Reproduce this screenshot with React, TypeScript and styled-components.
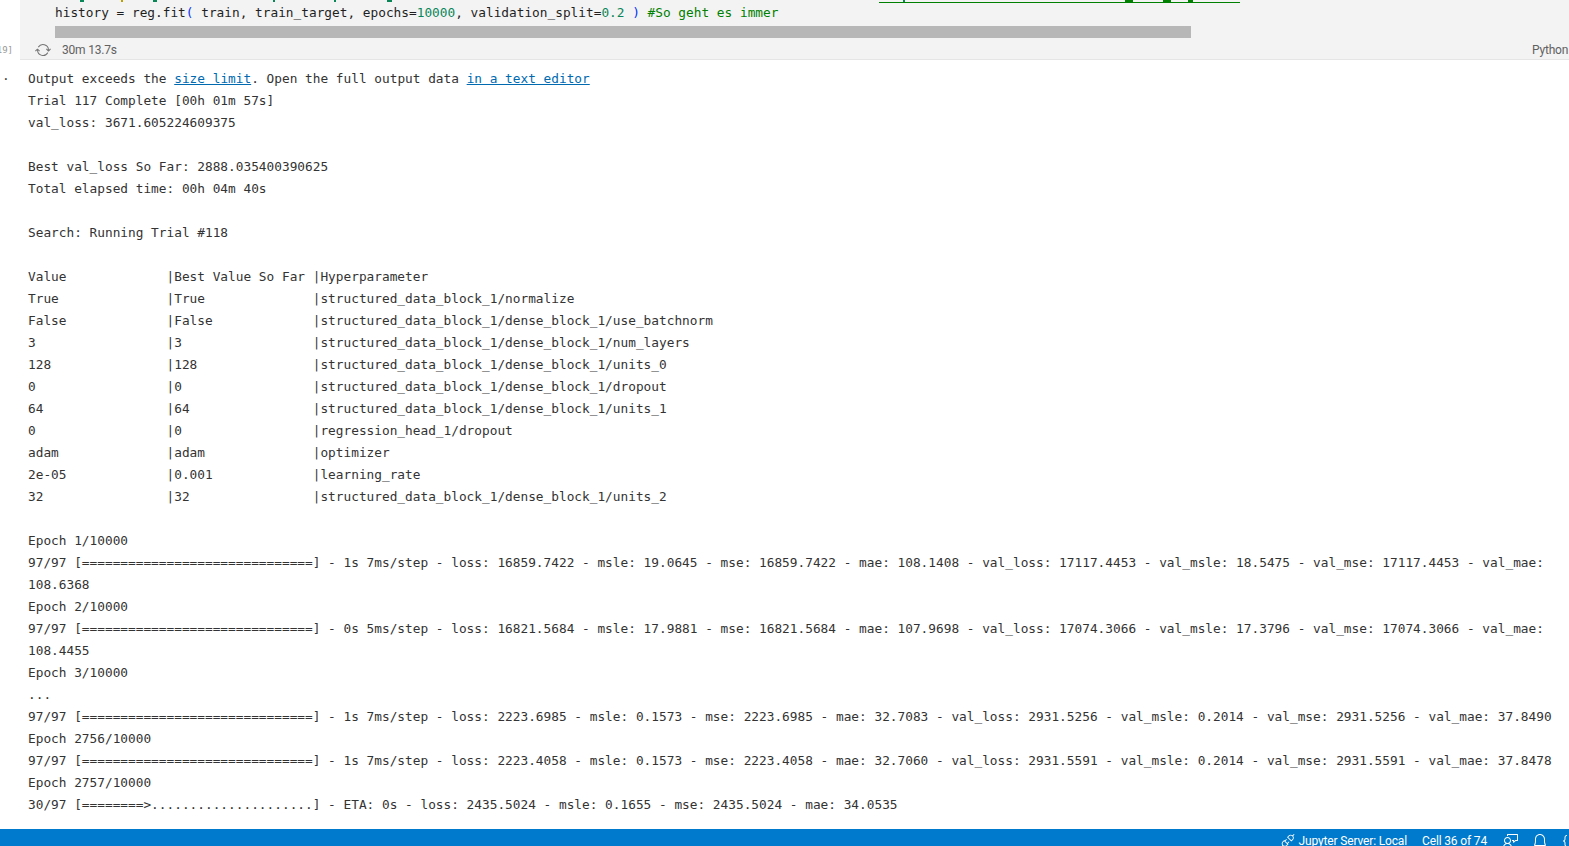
import React from 'react';
import styled, { createGlobalStyle } from 'styled-components';
import { VscBell, VscDebugDisconnect, VscFeedback, VscJson, VscSync } from 'react-icons/vsc';

const GlobalStyle = createGlobalStyle`
  html, body {
    margin: 0;
    padding: 0;
    height: 100%;
    overflow: hidden;
    background: #fff;
  }
`;

const Page = styled.div`
  display: flex;
  flex-direction: column;
  width: 1569px;
  height: 846px;
  overflow: hidden;
`;

const Main = styled.main`
  flex: 1;
  min-height: 0;
  overflow: hidden;
`;

const CellRow = styled.section`
  display: flex;
  height: 60px;
`;

const Gutter = styled.div`
  width: 20px;
  flex: none;
  display: flex;
  align-items: flex-end;
  justify-content: flex-end;
  padding: 0 7px 5px 0;
  box-sizing: border-box;
  font: 9px 'DejaVu Sans Mono', monospace;
  color: #999;
  white-space: nowrap;
`;

const CellBody = styled.div`
  flex: 1;
  min-width: 0;
  display: flex;
  flex-direction: column;
  background: #f3f3f3;
  border-bottom: 1px solid #e5e5e5;
  overflow: hidden;
`;

const ClippedLine = styled.svg`
  display: block;
  width: 1549px;
  height: 3px;
  flex: none;
`;

const CodeLine = styled.div`
  height: 23px;
  padding-left: 35px;
  box-sizing: border-box;
  font: 12.79px/20px 'DejaVu Sans Mono', monospace;
  white-space: pre;
  color: #1f1f1f;
`;

const Num = styled.span`
  color: #098658;
`;

const Paren = styled.span`
  color: #0431fa;
`;

const Comment = styled.span`
  color: #008000;
`;

const ScrollTrack = styled.div`
  height: 12px;
  padding-left: 35px;
`;

const ScrollThumb = styled.div`
  width: 1136px;
  height: 12px;
  background: #b7b7b7;
`;

const CellFooter = styled.div`
  flex: 1;
  display: flex;
  align-items: center;
  padding: 2px 0 0 15px;
  font: 12px Roboto, sans-serif;
  letter-spacing: -0.2px;
  color: #616161;
`;

const SpinIcon = styled(VscSync)`
  font-size: 16px;
  color: #757575;
  margin-right: 11px;
`;

const Language = styled.span`
  margin-left: auto;
  width: 37px;
  white-space: nowrap;
`;

const OutputRow = styled.section`
  display: flex;
  padding-top: 8px;
`;

const OutputMenu = styled.div`
  width: 28px;
  flex: none;
  padding-left: 2px;
  box-sizing: border-box;
  font: 12.79px/22px 'DejaVu Sans Mono', monospace;
  color: #444;
`;

const Output = styled.pre`
  margin: 0;
  width: 1530px;
  font: 12.79px/22px 'DejaVu Sans Mono', monospace;
  color: #333;
  white-space: pre-wrap;
`;

const OutLink = styled.a`
  color: #006ab1;
  text-decoration: underline;
`;

const StatusBar = styled.footer`
  height: 17px;
  flex: none;
  display: flex;
  align-items: flex-start;
  justify-content: flex-end;
  background: #007acc;
  color: #fff;
  font: 12px/24px Roboto, sans-serif;
  letter-spacing: -0.15px;
  overflow: hidden;
`;

const StatusItem = styled.span<{ $gap: number }>`
  display: flex;
  align-items: center;
  flex: none;
  height: 24px;
  gap: 3px;
  margin-left: ${(p) => p.$gap}px;
  white-space: nowrap;
  svg {
    font-size: 16px;
  }
`;

const LastItem = styled(StatusItem)`
  margin-right: -8px;
`;

// bits of the line scrolled off above: descenders and the green link underline
const clippedBits = [
  [60, 4, '#098658'],
  [101, 2, '#b8a000'],
  [133, 4, '#098658'],
  [253, 2, '#098658'],
  [314, 2, '#098658'],
  [367, 5, '#098658'],
  [883, 2, '#098658'],
  [1105, 8, '#008000'],
  [1143, 8, '#008000'],
  [1168, 5, '#008000'],
] as const;

const output = `Trial 117 Complete [00h 01m 57s]
val_loss: 3671.605224609375

Best val_loss So Far: 2888.035400390625
Total elapsed time: 00h 04m 40s

Search: Running Trial #118

Value             |Best Value So Far |Hyperparameter
True              |True              |structured_data_block_1/normalize
False             |False             |structured_data_block_1/dense_block_1/use_batchnorm
3                 |3                 |structured_data_block_1/dense_block_1/num_layers
128               |128               |structured_data_block_1/dense_block_1/units_0
0                 |0                 |structured_data_block_1/dense_block_1/dropout
64                |64                |structured_data_block_1/dense_block_1/units_1
0                 |0                 |regression_head_1/dropout
adam              |adam              |optimizer
2e-05             |0.001             |learning_rate
32                |32                |structured_data_block_1/dense_block_1/units_2

Epoch 1/10000
97/97 [==============================] - 1s 7ms/step - loss: 16859.7422 - msle: 19.0645 - mse: 16859.7422 - mae: 108.1408 - val_loss: 17117.4453 - val_msle: 18.5475 - val_mse: 17117.4453 - val_mae: 108.6368
Epoch 2/10000
97/97 [==============================] - 0s 5ms/step - loss: 16821.5684 - msle: 17.9881 - mse: 16821.5684 - mae: 107.9698 - val_loss: 17074.3066 - val_msle: 17.3796 - val_mse: 17074.3066 - val_mae: 108.4455
Epoch 3/10000
...
97/97 [==============================] - 1s 7ms/step - loss: 2223.6985 - msle: 0.1573 - mse: 2223.6985 - mae: 32.7083 - val_loss: 2931.5256 - val_msle: 0.2014 - val_mse: 2931.5256 - val_mae: 37.8490
Epoch 2756/10000
97/97 [==============================] - 1s 7ms/step - loss: 2223.4058 - msle: 0.1573 - mse: 2223.4058 - mae: 32.7060 - val_loss: 2931.5591 - val_msle: 0.2014 - val_mse: 2931.5591 - val_mae: 37.8478
Epoch 2757/10000
30/97 [========>.....................] - ETA: 0s - loss: 2435.5024 - msle: 0.1655 - mse: 2435.5024 - mae: 34.0535`;

const App = () => (
  <Page>
    <GlobalStyle />
    <Main>
      <CellRow>
        <Gutter>[19]</Gutter>
        <CellBody>
          <ClippedLine viewBox="0 0 1549 3">
            {clippedBits.map(([x, w, fill]) => (
              <rect key={x} x={x} y={0} width={w} height={2} fill={fill} />
            ))}
            <rect x={859} y={2} width={361} height={1} fill="#008000" />
          </ClippedLine>
          <CodeLine>
            history = reg.fit<Paren>(</Paren> train, train_target, epochs=<Num>10000</Num>, validation_split=<Num>0.2</Num> <Paren>)</Paren> <Comment>#So geht es immer</Comment>
          </CodeLine>
          <ScrollTrack>
            <ScrollThumb />
          </ScrollTrack>
          <CellFooter>
            <SpinIcon />
            30m 13.7s
            <Language>Python</Language>
          </CellFooter>
        </CellBody>
      </CellRow>
      <OutputRow>
        <OutputMenu>·</OutputMenu>
        <Output>
          Output exceeds the <OutLink>size limit</OutLink>. Open the full output data <OutLink>in a text editor</OutLink>
          {'\n' + output}
        </Output>
      </OutputRow>
    </Main>
    <StatusBar>
      <StatusItem $gap={0}><VscDebugDisconnect />Jupyter Server: Local</StatusItem>
      <StatusItem $gap={15}>Cell 36 of 74</StatusItem>
      <StatusItem $gap={16}><VscFeedback /></StatusItem>
      <StatusItem $gap={13}><VscBell /></StatusItem>
      <LastItem $gap={13}><VscJson /></LastItem>
    </StatusBar>
  </Page>
);

export default App;
